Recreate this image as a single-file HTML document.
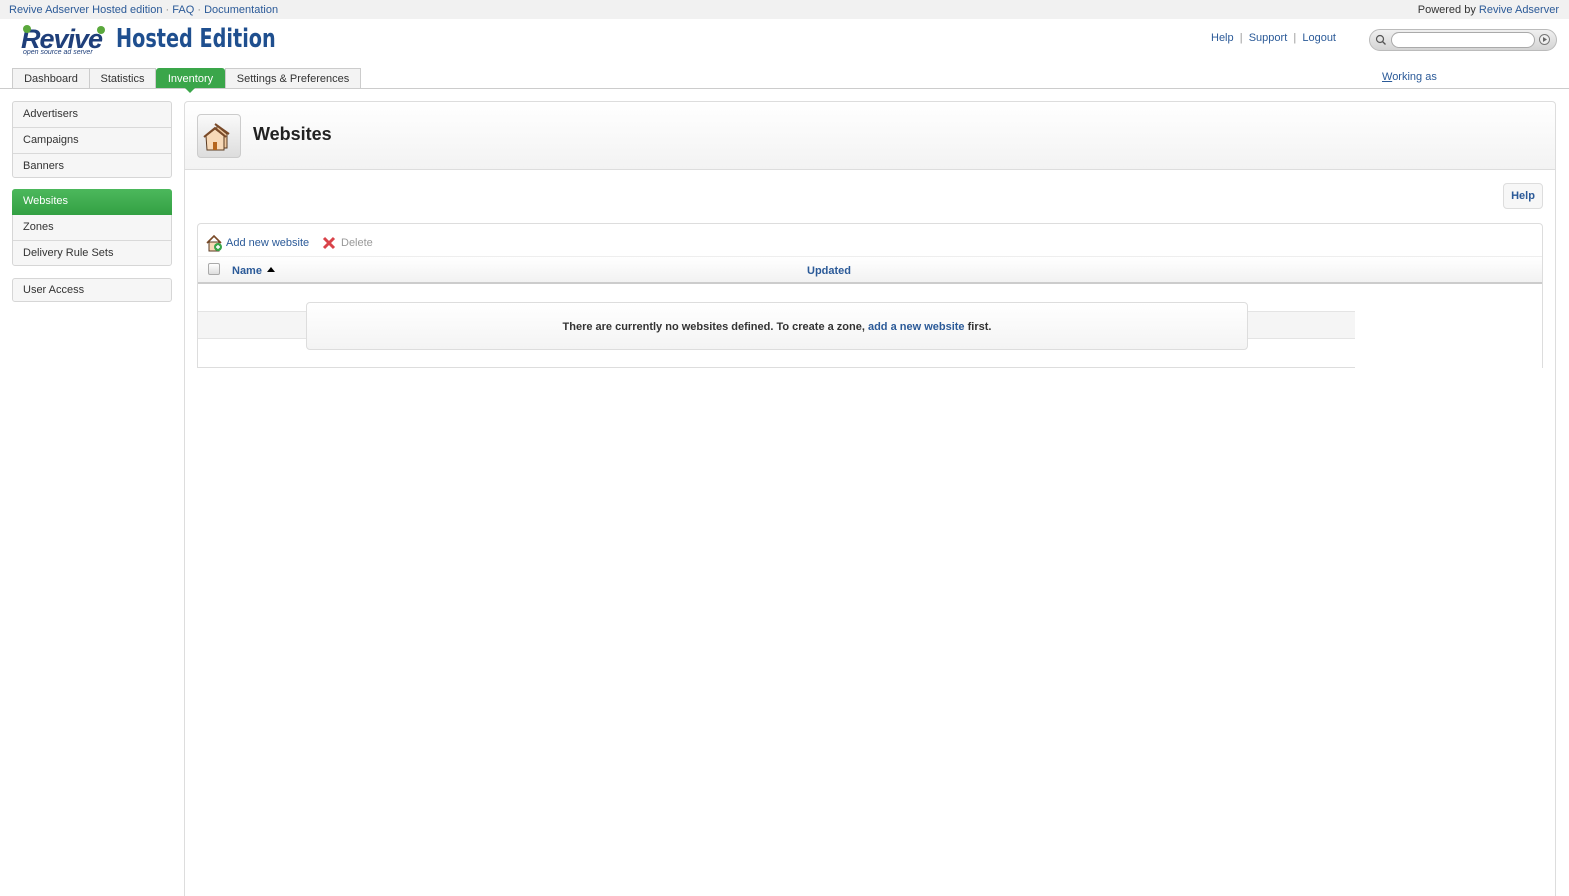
<!DOCTYPE html>
<html style="width:1569px;height:896px;overflow:hidden"><head><meta charset="utf-8"><style>
*{box-sizing:border-box;margin:0;padding:0}
body{width:1569px;height:896px;position:relative;background:#fff;font-family:"Liberation Sans",Arial,sans-serif;font-size:11px;color:#333;overflow:hidden}
a{color:#2b5a98;text-decoration:none}
.abs{position:absolute}
#top{left:0;top:0;width:1569px;height:19px;background:#f1f1f1}
.tab{position:absolute;top:68px;height:21px;border:1px solid #ccc;border-bottom:none;background:#f3f3f3;font-size:11px;line-height:20px;text-align:center;color:#333}
.side{position:absolute;left:12px;width:160px;border:1px solid #d6d6d6;border-radius:3px;background:#f6f6f6}
.side div{height:26px;line-height:25px;padding-left:10px;border-bottom:1px solid #d9d9d9;font-size:11px;color:#333}
.side div:last-child{border-bottom:none}
</style></head><body>
<div id="top" class="abs"></div>
<div class="abs" style="left:9px;top:4px;font-size:11px"><a>Revive Adserver Hosted edition</a> <span style="color:#888">·</span> <a>FAQ</a> <span style="color:#888">·</span> <a>Documentation</a></div>
<div class="abs" style="right:10px;top:4px;font-size:11px;color:#333">Powered by <a>Revive Adserver</a></div>

<div class="abs" style="left:21px;top:24px;font-size:27px;font-weight:bold;font-style:italic;color:#1f3f7a;letter-spacing:-1px;font-family:'Liberation Sans',sans-serif">Revive</div>
<svg class="abs" style="left:20px;top:22px" width="90" height="14"><circle cx="7" cy="7" r="4" fill="#5aa83c"/><circle cx="81" cy="8" r="4" fill="#5aa83c"/></svg>
<div class="abs" style="left:23px;top:49px;font-size:7px;font-style:italic;color:#1f3f7a">open source ad server</div>
<div class="abs" style="left:116px;top:24px;font-size:26px;font-weight:bold;color:#1f4f8f;font-family:'DejaVu Sans',sans-serif;transform:scaleX(0.74);transform-origin:0 0;white-space:nowrap">Hosted Edition</div>

<div class="abs" style="left:1211px;top:32px;font-size:11px;color:#999"><a>Help</a> &nbsp;|&nbsp; <a>Support</a> &nbsp;|&nbsp; <a>Logout</a></div>
<div class="abs" style="left:1369px;top:29px;width:188px;height:22px;border-radius:11px;background:linear-gradient(#f0f0f0,#d4d4d4);border:1px solid #bbb"></div>
<div class="abs" style="left:1391px;top:32px;width:144px;height:16px;border-radius:8px;background:#fff;border:1px solid #aaa"></div>
<svg class="abs" style="left:1375px;top:34px" width="12" height="12"><circle cx="5" cy="5" r="3.5" fill="none" stroke="#555" stroke-width="1.2"/><line x1="7.5" y1="7.5" x2="10.5" y2="10.5" stroke="#555" stroke-width="1.3"/></svg>
<svg class="abs" style="left:1538px;top:33px" width="13" height="13"><circle cx="6.5" cy="6.5" r="5" fill="#eee" stroke="#777"/><path d="M5 4 L9 6.5 L5 9Z" fill="#666"/></svg>
<div class="abs" style="left:1382px;top:71px;font-size:11px"><a><u>W</u>orking as</a></div>

<div class="tab" style="left:12px;width:78px">Dashboard</div>
<div class="tab" style="left:89px;width:67px">Statistics</div>
<div class="tab" style="left:156px;width:69px;background:#3aa64a;border-color:#3aa64a;color:#fff;border-radius:3px 3px 0 0">Inventory</div>
<div class="tab" style="left:225px;width:136px">Settings &amp; Preferences</div>
<div class="abs" style="left:0;top:88px;width:1569px;height:1px;background:#ccc"></div>
<div class="abs" style="left:185px;top:88px;width:0;height:0;border-left:5px solid transparent;border-right:5px solid transparent;border-top:5px solid #3aa64a"></div>

<div class="side" style="top:101px;height:77px"><div>Advertisers</div><div>Campaigns</div><div>Banners</div></div>
<div class="side" style="top:189px;height:77px"><div style="background:linear-gradient(#4cb85c,#33a043);color:#fff;border-radius:3px 3px 0 0;border-bottom:none;margin:-1px -1px 0 -1px;padding-left:11px">Websites</div><div>Zones</div><div>Delivery Rule Sets</div></div>
<div class="side" style="top:278px;height:24px"><div style="height:22px;line-height:23px">User Access</div></div>

<div class="abs" style="left:184px;top:101px;width:1372px;height:798px;border:1px solid #ddd;border-bottom:none;border-radius:4px 4px 0 0"></div>
<div class="abs" style="left:185px;top:102px;width:1370px;height:68px;background:linear-gradient(#fff,#f3f3f3);border-bottom:1px solid #ddd;border-radius:4px 4px 0 0"></div>
<div class="abs" style="left:197px;top:114px;width:44px;height:44px;border:1px solid #ccc;border-radius:4px;background:linear-gradient(#fafafa,#ddd)"></div>
<svg class="abs" style="left:203px;top:120px" width="34" height="32"><path d="M14 6 L24 14 L24 28 L12 28Z" fill="#f0c9a0" stroke="#5a3a20"/><path d="M3 16 L12 9 L21 16 L21 30 L4 30Z" fill="#f7d9b8" stroke="#5a3a20"/><path d="M1 17 L12 8 L23 17" fill="none" stroke="#7a4a28" stroke-width="2"/><path d="M12 4 L26 14" stroke="#7a4a28" stroke-width="2"/><rect x="10" y="22" width="4" height="8" fill="#b5651d"/></svg>
<div class="abs" style="left:253px;top:124px;font-size:18px;font-weight:bold;color:#222">Websites</div>

<div class="abs" style="left:1503px;top:183px;width:40px;height:26px;border:1px solid #ddd;border-radius:4px;background:#f7f7f7;font-weight:bold;color:#2b5a98;text-align:center;line-height:25px">Help</div>

<div class="abs" style="left:197px;top:223px;width:1346px;height:145px;border:1px solid #ddd;border-bottom:none;border-radius:4px 4px 0 0"></div>
<svg class="abs" style="left:205px;top:234px" width="18" height="18"><path d="M2 9 L9 2 L16 9" fill="none" stroke="#7a4a28" stroke-width="1.6"/><rect x="4" y="8" width="10" height="9" fill="#f7d9b8" stroke="#5a3a20"/><circle cx="13" cy="13" r="4" fill="#3aa64a"/><path d="M11 13h4M13 11v4" stroke="#fff" stroke-width="1.4"/></svg>
<div class="abs" style="left:226px;top:237px"><a>Add new website</a></div>
<svg class="abs" style="left:322px;top:236px" width="14" height="14"><path d="M2 2 L12 12 M12 2 L2 12" stroke="#d9434a" stroke-width="3"/></svg>
<div class="abs" style="left:341px;top:237px;color:#999">Delete</div>
<div class="abs" style="left:198px;top:256px;width:1344px;height:28px;background:linear-gradient(#fff,#f2f2f2);border-top:1px solid #eee;border-bottom:2px solid #ccc"></div>
<div class="abs" style="left:208px;top:263px;width:12px;height:12px;border:1px solid #aaa;border-radius:2px;background:linear-gradient(#fff,#ddd)"></div>
<div class="abs" style="left:232px;top:265px;font-weight:bold;color:#2b5a98">Name</div>
<div class="abs" style="left:267px;top:267px;width:0;height:0;border-left:4px solid transparent;border-right:4px solid transparent;border-bottom:5px solid #000"></div>
<div class="abs" style="left:807px;top:265px;font-weight:bold;color:#2b5a98">Updated</div>

<div class="abs" style="left:198px;top:311px;width:1157px;height:28px;background:#f5f5f5;border-top:1px solid #e4e4e4;border-bottom:1px solid #e4e4e4"></div>
<div class="abs" style="left:197px;top:367px;width:1158px;height:1px;background:#ddd"></div>
<div class="abs" style="left:306px;top:302px;width:942px;height:48px;border:1px solid #ddd;border-radius:4px;background:linear-gradient(#fff,#f4f4f4);text-align:center;line-height:48px;font-weight:bold;color:#333">There are currently no websites defined. To create a zone, <a>add a new website</a> first.</div>
</body></html>
